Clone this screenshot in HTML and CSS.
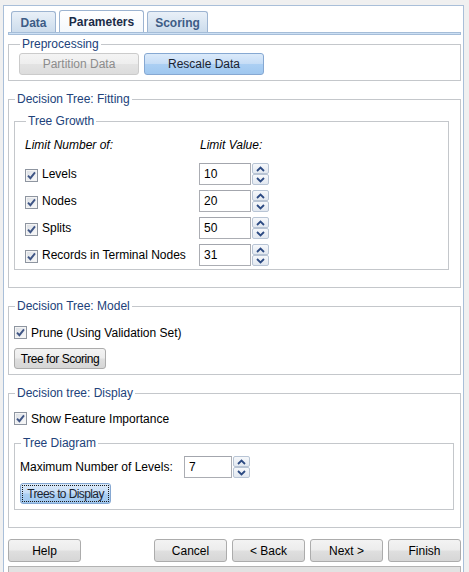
FILE: index.html
```html
<!DOCTYPE html>
<html>
<head>
<meta charset="utf-8">
<link rel="stylesheet" href="styles.css">
</head>
<body>
<div class="window">
  <div class="tabs">
    <div class="tab tab-data">Data</div>
    <div class="tab tab-params active">Parameters</div>
    <div class="tab tab-scoring">Scoring</div>
  </div>
  <div class="tabline"></div>

  <fieldset class="fs fs-pre">
    <legend>Preprocessing</legend>
    <div class="btnrow">
      <div class="btn dis w120">Partition Data</div>
      <div class="btn blue w120">Rescale Data</div>
    </div>
  </fieldset>

  <fieldset class="fs fs-fit">
    <legend>Decision Tree: Fitting</legend>
    <fieldset class="fs fs-growth">
      <legend>Tree Growth</legend>
      <div class="tg-head">
        <span class="col1">Limit Number of:</span>
        <span class="col2">Limit Value:</span>
      </div>
      <div class="tg-rows">
        <div class="tg-row">
          <div class="col1 cblabel"><span class="cb"><svg width="9" height="9" viewBox="0 0 9 9"><path d="M1 4.6 L3.4 7.2 L8 1.4" fill="none" stroke="#3f5585" stroke-width="1.9"/></svg></span><span>Levels</span></div>
          <div class="spin"><div class="field">10</div><div class="arrows"><span class="arr"><svg width="9" height="6" viewBox="0 0 9 6"><path d="M1 5 L4.5 1.5 L8 5" fill="none" stroke="#2c4a82" stroke-width="1.8"/></svg></span><span class="arr"><svg width="9" height="6" viewBox="0 0 9 6"><path d="M1 1 L4.5 4.5 L8 1" fill="none" stroke="#2c4a82" stroke-width="1.8"/></svg></span></div></div>
        </div>
        <div class="tg-row">
          <div class="col1 cblabel"><span class="cb"><svg width="9" height="9" viewBox="0 0 9 9"><path d="M1 4.6 L3.4 7.2 L8 1.4" fill="none" stroke="#3f5585" stroke-width="1.9"/></svg></span><span>Nodes</span></div>
          <div class="spin"><div class="field">20</div><div class="arrows"><span class="arr"><svg width="9" height="6" viewBox="0 0 9 6"><path d="M1 5 L4.5 1.5 L8 5" fill="none" stroke="#2c4a82" stroke-width="1.8"/></svg></span><span class="arr"><svg width="9" height="6" viewBox="0 0 9 6"><path d="M1 1 L4.5 4.5 L8 1" fill="none" stroke="#2c4a82" stroke-width="1.8"/></svg></span></div></div>
        </div>
        <div class="tg-row">
          <div class="col1 cblabel"><span class="cb"><svg width="9" height="9" viewBox="0 0 9 9"><path d="M1 4.6 L3.4 7.2 L8 1.4" fill="none" stroke="#3f5585" stroke-width="1.9"/></svg></span><span>Splits</span></div>
          <div class="spin"><div class="field">50</div><div class="arrows"><span class="arr"><svg width="9" height="6" viewBox="0 0 9 6"><path d="M1 5 L4.5 1.5 L8 5" fill="none" stroke="#2c4a82" stroke-width="1.8"/></svg></span><span class="arr"><svg width="9" height="6" viewBox="0 0 9 6"><path d="M1 1 L4.5 4.5 L8 1" fill="none" stroke="#2c4a82" stroke-width="1.8"/></svg></span></div></div>
        </div>
        <div class="tg-row">
          <div class="col1 cblabel"><span class="cb"><svg width="9" height="9" viewBox="0 0 9 9"><path d="M1 4.6 L3.4 7.2 L8 1.4" fill="none" stroke="#3f5585" stroke-width="1.9"/></svg></span><span>Records in Terminal Nodes</span></div>
          <div class="spin"><div class="field">31</div><div class="arrows"><span class="arr"><svg width="9" height="6" viewBox="0 0 9 6"><path d="M1 5 L4.5 1.5 L8 5" fill="none" stroke="#2c4a82" stroke-width="1.8"/></svg></span><span class="arr"><svg width="9" height="6" viewBox="0 0 9 6"><path d="M1 1 L4.5 4.5 L8 1" fill="none" stroke="#2c4a82" stroke-width="1.8"/></svg></span></div></div>
        </div>
      </div>
    </fieldset>
  </fieldset>

  <fieldset class="fs fs-model">
    <legend>Decision Tree: Model</legend>
    <div class="cblabel cbrow"><span class="cb"><svg width="9" height="9" viewBox="0 0 9 9"><path d="M1 4.6 L3.4 7.2 L8 1.4" fill="none" stroke="#3f5585" stroke-width="1.9"/></svg></span><span>Prune (Using Validation Set)</span></div>
    <div class="btn btn-scoring">Tree for Scoring</div>
  </fieldset>

  <fieldset class="fs fs-display">
    <legend>Decision tree: Display</legend>
    <div class="cblabel cbrow"><span class="cb"><svg width="9" height="9" viewBox="0 0 9 9"><path d="M1 4.6 L3.4 7.2 L8 1.4" fill="none" stroke="#3f5585" stroke-width="1.9"/></svg></span><span>Show Feature Importance</span></div>
    <fieldset class="fs fs-diagram">
      <legend>Tree Diagram</legend>
      <div class="td-row">
        <span class="td-label">Maximum Number of Levels:</span>
        <div class="spin spin-small"><div class="field">7</div><div class="arrows"><span class="arr"><svg width="9" height="6" viewBox="0 0 9 6"><path d="M1 5 L4.5 1.5 L8 5" fill="none" stroke="#2c4a82" stroke-width="1.8"/></svg></span><span class="arr"><svg width="9" height="6" viewBox="0 0 9 6"><path d="M1 1 L4.5 4.5 L8 1" fill="none" stroke="#2c4a82" stroke-width="1.8"/></svg></span></div></div>
      </div>
      <div class="btn blue btn-trees"><span class="focusbox">Trees to Display</span></div>
    </fieldset>
  </fieldset>

  <div class="footer">
    <div class="btn fbtn">Help</div>
    <div class="spacer"></div>
    <div class="btn fbtn">Cancel</div>
    <div class="btn fbtn">&lt; Back</div>
    <div class="btn fbtn">Next &gt;</div>
    <div class="btn fbtn">Finish</div>
  </div>
  <div class="status"></div>
</div>
</body>
</html>
```
FILE: styles.css
```css
* { box-sizing: border-box; }
html, body { height: 100%; }
body {
  margin: 0;
  background: #f0f0f0;
  font: 12px/14px "Liberation Sans", Arial, sans-serif;
  color: #000;
  overflow: hidden;
}
.window {
  margin: 5px 0 0 3px;
  width: 461px;
  height: 567px;
  background: #fff;
  border: 1px solid #a9bfd9;
  border-bottom: none;
  padding: 0 2px 0 4px;
  overflow: hidden;
}
.tabs {
  display: flex;
  align-items: flex-end;
  height: 26px;
  margin-left: 3px;
  gap: 3px;
}
.tab {
  height: 21px;
  border: 1px solid #9db4d1;
  border-bottom: none;
  border-radius: 3px 3px 0 0;
  background: linear-gradient(#e9f0f8, #ccdcec);
  color: #3d5c86;
  font-weight: bold;
  display: flex;
  align-items: center;
  justify-content: center;
  padding-top: 1px;
}
.tab.active {
  height: 22px;
  background: linear-gradient(#ffffff, #f4f8fc);
  color: #1b2c48;
}
.tab-data { width: 45px; }
.tab-params { width: 85px; }
.tab-scoring { width: 61px; }
.tabline {
  height: 3px;
  border: 1px solid #a5bdd8;
  background: #cde0f4;
}
.fs {
  border: 1px solid #c4c7cb;
  margin: 11px 0 0;
  min-width: 0;
}
.fs legend {
  padding: 0 2px;
  margin-left: 1px;
  color: #21427a;
  line-height: 14px;
}
.fs-pre { margin-top: 2px; padding: 2px 0 5px 10px; }
.btnrow { display: flex; gap: 5px; }
.btn {
  height: 22px;
  border: 1px solid #acacac;
  border-radius: 3px;
  background: linear-gradient(#f3f3f3 0%, #ececec 48%, #dfdfdf 52%, #d6d6d6 100%);
  display: flex;
  align-items: center;
  justify-content: center;
  color: #000;
  white-space: nowrap;
}
.w120 { width: 120px; }
.btn.dis {
  border-color: #cbcbcb;
  background: linear-gradient(#f4f4f4 0%, #eeeeee 48%, #e3e3e3 52%, #dcdcdc 100%);
  color: #8c8c8c;
}
.btn.blue {
  border-color: #86a8d2;
  background: linear-gradient(#dbeafa 0%, #c6ddf6 48%, #abcff3 52%, #9fc7ef 100%);
  color: #1b2330;
}
.fs-fit { padding: 8px 11px 17px 5px; }
.fs-growth { margin-top: 0; padding: 10px 0 3px 10px; }
.tg-head {
  display: flex;
  font-style: italic;
  margin-bottom: 11px;
}
.col1 { width: 174px; flex: none; }
.col2 { padding-left: 1px; }
.tg-rows { display: flex; flex-direction: column; gap: 5px; }
.tg-row { display: flex; align-items: center; height: 22px; }
.cblabel { display: flex; align-items: center; gap: 4px; }
.tg-row .cb { margin-top: 2px; }
.cb {
  width: 13px;
  height: 13px;
  flex: none;
  border: 1px solid #8e95a0;
  background: linear-gradient(135deg, #d9dde3, #fbfbfb);
  box-shadow: inset 0 0 0 1px #f4f4f4;
  display: flex;
  align-items: center;
  justify-content: center;
}
.cb svg { display: block; }
.spin { display: flex; gap: 1px; height: 22px; }
.field {
  width: 52px;
  height: 22px;
  border: 1px solid #abadb3;
  border-top-color: #a3a6ad;
  padding-left: 4px;
  display: flex;
  align-items: center;
  background: #fff;
}
.spin-small .field { width: 48px; }
.arrows {
  width: 17px;
  height: 22px;
  display: flex;
  flex-direction: column;
}
.arr {
  flex: 1;
  border: 1px solid #b8c4d4;
  border-radius: 2px;
  background: linear-gradient(#f6f8fb, #e2e8f0);
  display: flex;
  align-items: center;
  justify-content: center;
}
.arr svg { display: block; }
.fs-model { padding: 13px 0 5px 5px; }
.cbrow { height: 13px; }
.btn-scoring { width: 92px; height: 21px; margin-top: 9px; letter-spacing: -0.45px; }
.fs-display { padding: 12px 6px 17px 5px; }
.fs-diagram { padding: 6px 0 5px 5px; }
.td-row { display: flex; align-items: center; height: 22px; }
.td-label { width: 164px; flex: none; }
.btn-trees { width: 91px; height: 21px; margin-top: 5px; padding: 1px; letter-spacing: -0.6px; }
.focusbox {
  flex: 1;
  align-self: stretch;
  border: 1px dotted #1a1a1a;
  display: flex;
  align-items: center;
  justify-content: center;
}
.footer { display: flex; gap: 5px; margin-top: 11px; }
.spacer { flex: 1; }
.fbtn { width: 73px; height: 23px; }
.status {
  margin-top: 4px;
  height: 10px;
  border: 1px solid #b3b3b3;
  background: #e2e2e2;
}
```
